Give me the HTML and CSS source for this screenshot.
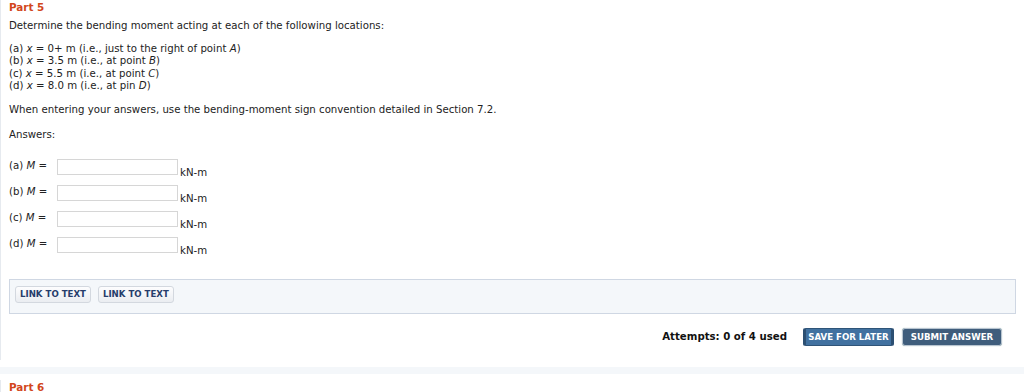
FILE: index.html
```html
<!DOCTYPE html>
<html lang="en">
<head>
    <meta charset="UTF-8">
    <title>Part 5</title>
    <link rel="stylesheet" href="styles.css">
</head>
<body>
    <div class="part">
        <h3 class="part-title">Part 5</h3>
        <p class="lead">Determine the bending moment acting at each of the following locations:</p>
        <p class="cases">
            (a) <i>x</i> = 0+ m (i.e., just to the right of point <i>A</i>)<br>
            (b) <i>x</i> = 3.5 m (i.e., at point <i>B</i>)<br>
            (c) <i>x</i> = 5.5 m (i.e., at point <i>C</i>)<br>
            (d) <i>x</i> = 8.0 m (i.e., at pin <i>D</i>)
        </p>
        <p class="note">When entering your answers, use the bending-moment sign convention detailed in Section 7.2.</p>
        <p class="answers-label">Answers:</p>

        <div class="answers">
            <div class="answer-row">
                <span class="answer-label">(a) <i>M</i> =</span>
                <input type="text" class="answer-input">
                <span class="unit">kN-m</span>
            </div>
            <div class="answer-row">
                <span class="answer-label">(b) <i>M</i> =</span>
                <input type="text" class="answer-input">
                <span class="unit">kN-m</span>
            </div>
            <div class="answer-row">
                <span class="answer-label">(c) <i>M</i> =</span>
                <input type="text" class="answer-input">
                <span class="unit">kN-m</span>
            </div>
            <div class="answer-row">
                <span class="answer-label">(d) <i>M</i> =</span>
                <input type="text" class="answer-input">
                <span class="unit">kN-m</span>
            </div>
        </div>

        <div class="links-box">
            <button class="link-btn">LINK TO TEXT</button>
            <button class="link-btn">LINK TO TEXT</button>
        </div>

        <div class="submit-bar">
            <span class="attempts">Attempts: 0 of 4 used</span>
            <button class="btn-save">SAVE FOR LATER</button>
            <button class="btn-submit">SUBMIT ANSWER</button>
        </div>
    </div>

    <div class="separator"></div>

    <div class="part">
        <h3 class="part-title">Part 6</h3>
    </div>
</body>
</html>
```

FILE: styles.css
```css
body {
    font-family: "DejaVu Sans", Verdana, sans-serif;
    font-size: 10.2px;
    color: #222;
    margin: 0;
    background: #fff;
}
.part {
    border-left: 1px solid #e6eaef;
    padding: 0 8px 0 8px;
}
.part-title {
    color: #d2461c;
    font-size: 10.4px;
    font-weight: bold;
    margin: 0;
    padding-top: 1px;
    line-height: 13px;
}
.lead {
    margin: 5px 0 0 0;
    line-height: 13px;
}
.cases {
    margin: 11px 0 0 0;
    line-height: 12.4px;
}
.note {
    margin: 10px 0 0 0;
    line-height: 13px;
}
.answers-label {
    margin: 12px 0 0 0;
    line-height: 13px;
}
.answers {
    margin-top: 18px;
}
.answer-row {
    display: flex;
    align-items: flex-start;
    height: 26px;
}
.answer-label {
    width: 48px;
    line-height: 13px;
}
.answer-input {
    width: 119px;
    height: 14px;
    margin: 0;
    padding: 0;
    border: 1px solid #d6d6d6;
    border-radius: 0;
    font-size: 11px;
}
.unit {
    padding-top: 7px;
    padding-left: 2px;
    line-height: 13px;
}
.links-box {
    margin-top: 16px;
    height: 33px;
    background: #f4f7fa;
    border: 1px solid #cfd7e3;
    padding: 0 5px;
    display: flex;
    align-items: center;
    gap: 7px;
}
.link-btn {
    font-family: "DejaVu Sans", Verdana, sans-serif;
    font-size: 8.6px;
    font-weight: bold;
    color: #263d6b;
    background: linear-gradient(#fdfdfe, #eaedf1);
    border: 1px solid #d3d8df;
    border-radius: 3px;
    padding: 0 4px;
    height: 17px;
    margin-top: -4px;
    white-space: nowrap;
    cursor: pointer;
}
.submit-bar {
    display: flex;
    justify-content: flex-end;
    align-items: center;
    height: 46px;
    padding-right: 14px;
}
.attempts {
    font-weight: bold;
    color: #111;
    margin-right: 16px;
}
.btn-save, .btn-submit {
    font-family: "DejaVu Sans", Verdana, sans-serif;
    font-size: 8.6px;
    font-weight: bold;
    color: #fff;
    height: 18px;
    white-space: nowrap;
    cursor: pointer;
}
.btn-save {
    background: #4171a0;
    border: 1px solid #2f5478;
    border-left: 3px solid #2c4f72;
    border-right: 3px solid #2c4f72;
    border-radius: 2px;
    width: 91px;
    padding: 0;
    margin-right: 8px;
}
.btn-submit {
    background: #3f5d7c;
    border: 1px solid #b8c4d0;
    border-radius: 3px;
    width: 100px;
    padding: 0;
    box-shadow: 0 0 1px #8aa;
}
.separator {
    height: 7px;
    background: #f4f7fa;
    margin-top: 7px;
    margin-bottom: 6px;
}
```
